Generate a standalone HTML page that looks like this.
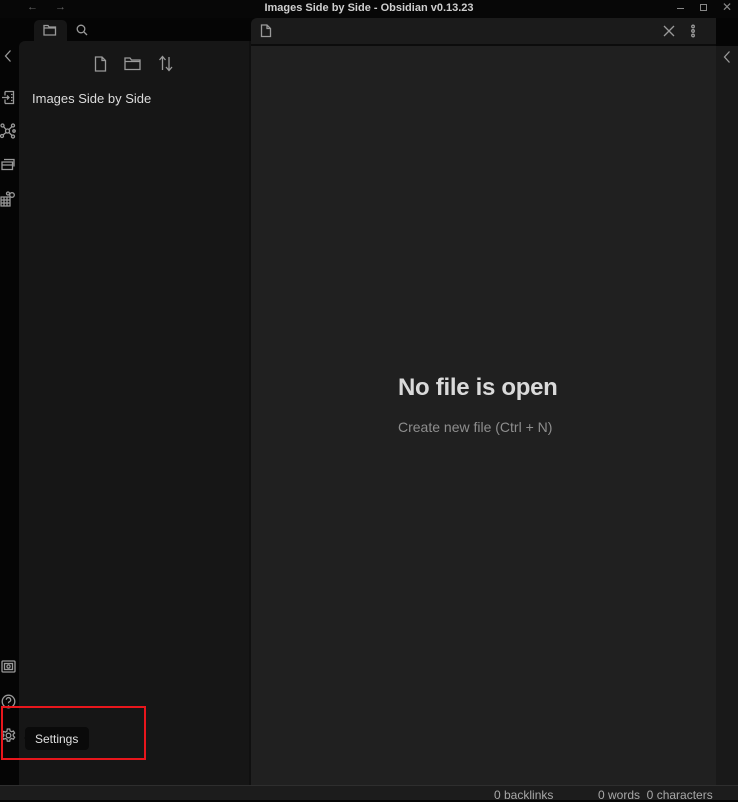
<!DOCTYPE html>
<html><head><style>
*{margin:0;padding:0;box-sizing:border-box}
body{width:738px;height:800px;background:#050505;font-family:"Liberation Sans",sans-serif;position:relative;overflow:hidden;color:#ddd}
.a{position:absolute}
svg{position:absolute;fill:none;stroke:#9a9a9a;stroke-width:1.3}
</style></head><body>
<div class="a" style="left:0;top:0;width:738px;height:18px;background:#070707"></div>
<div class="a" style="left:0;top:2px;width:738px;text-align:center;font-size:11px;font-weight:bold;color:#cfcfcf">Images Side by Side - Obsidian v0.13.23</div>
<div class="a" style="left:27px;top:1px;font-size:11px;color:#666">←</div>
<div class="a" style="left:55px;top:1px;font-size:11px;color:#666">→</div>
<div class="a" style="left:677px;top:8px;width:7px;height:1px;background:#888"></div>
<div class="a" style="left:700px;top:4px;width:7px;height:7px;border:1px solid #888"></div>
<div class="a" style="left:722px;top:0px;font-size:12px;color:#888">✕</div>
<div class="a" style="left:34px;top:20px;width:33px;height:22px;background:#161616;border-radius:5px 5px 0 0"></div>
<svg style="left:43px;top:24px" width="14" height="12"><path d="M1 1.5h4l1 1.5h6.5v8H1z M1 4h11.5"/></svg>
<svg style="left:76px;top:24px" width="12" height="12"><circle cx="5" cy="5" r="3.8"/><path d="M8 8l3 3"/></svg>
<div class="a" style="left:19px;top:41px;width:231px;height:745px;background:#161616;border-radius:6px 0 0 0"></div>
<div class="a" style="left:249px;top:41px;width:2px;height:745px;background:#101010"></div>
<svg style="left:94px;top:56px" width="13" height="16"><path d="M1.5 1h6.5l3.5 3.5V15h-10z M8 1v3.5h3.5"/></svg>
<svg style="left:124px;top:56px" width="18" height="15"><path d="M1 2h5l1.5 2h8.5v9.5H1z M1 5.5h15"/></svg>
<svg style="left:158px;top:55px" width="16" height="17"><path d="M4.5 15V2 M1.5 5l3-3.5 3 3.5 M11 2v13 M8 12l3 3.5 3-3.5"/></svg>
<div class="a" style="left:32px;top:91px;font-size:13px;color:#dcdcdc">Images Side by Side</div>
<svg style="left:3px;top:49px" width="10" height="14"><path d="M7.5 1.5L2.5 7l5 5.5"/></svg>
<svg style="left:1px;top:90px" width="14" height="15"><path d="M4 1.5h8.5v12H4 M4 5.5V1.5 M4 13.5v-4 M1 7.5h7 M6 5.5l2 2-2 2 M10 4.5h1.5 M10 7.5h1.5 M10 10.5h1.5"/></svg>
<svg style="left:0px;top:123px" width="16" height="16"><circle cx="7.5" cy="8" r="2"/><circle cx="2.5" cy="2.5" r="1.5"/><circle cx="13" cy="2.5" r="1.5"/><circle cx="2" cy="13" r="1.5"/><circle cx="13" cy="13.5" r="1.5"/><circle cx="14" cy="8" r="1.2"/><path d="M3.5 3.5l2.5 3 M12 3.5l-3 3 M3 12l3-2.5 M12 12.5l-3-3"/></svg>
<svg style="left:1px;top:158px" width="14" height="13"><path d="M3 1.5h10v7 M1 4h10.5v7.5H1z M1 7h10.5"/></svg>
<svg style="left:0px;top:191px" width="16" height="16"><path d="M1 6h9v9H1z M1 9h9 M1 12h9 M4 6v9 M7 6v9"/><circle cx="12" cy="4" r="2.3"/><circle cx="8" cy="2.5" r="1.5"/></svg>
<svg style="left:1px;top:660px" width="15" height="13"><rect x="1" y="1" width="13" height="11" rx="1"/><rect x="3.5" y="3.5" width="8" height="6"/><circle cx="7.5" cy="6.5" r="1.6"/></svg>
<svg style="left:1px;top:694px" width="15" height="15"><circle cx="7.5" cy="7.5" r="6.3"/><path d="M5.3 5.8a2.2 2.2 0 1 1 2.8 2.1c-.5.2-.6.6-.6 1.4 M7.5 11v.8"/></svg>
<svg style="left:1px;top:728px" width="15" height="15"><circle cx="7.5" cy="7.5" r="2.3"/><path d="M6.3 1h2.4l.4 1.9 1.5.8 1.8-.7 1.2 2-1.4 1.3v1.6l1.4 1.3-1.2 2-1.8-.7-1.5.8-.4 1.9H6.3l-.4-1.9-1.5-.8-1.8.7-1.2-2 1.4-1.3V6.7L1.4 5.4l1.2-2 1.8.7 1.5-.8z"/></svg>
<div class="a" style="left:20px;top:734px;width:0;height:0;border:4px solid transparent;border-right:5px solid #0a0a0a"></div>
<div class="a" style="left:25px;top:727px;width:64px;height:23px;background:#0a0a0a;border-radius:4px;font-size:12px;color:#e0e0e0;padding:5px 0 0 10px">Settings</div>
<div class="a" style="left:1px;top:706px;width:145px;height:54px;border:2px solid #e8161c"></div>
<div class="a" style="left:251px;top:18px;width:465px;height:26px;background:#1b1b1b;border-radius:6px 0 0 0"></div>
<div class="a" style="left:251px;top:44px;width:465px;height:2px;background:#0c0c0c"></div>
<div class="a" style="left:251px;top:46px;width:465px;height:740px;background:#202020"></div>
<svg style="left:260px;top:24px" width="12" height="14"><path d="M1.5 1h5.5l3.5 3.5V12.5h-9z M7 1v3.5h3.5"/></svg>
<svg style="left:663px;top:25px" width="12" height="12"><path d="M1 1l10 10M11 1L1 11"/></svg>
<svg style="left:690px;top:24px" width="6" height="14"><circle cx="3" cy="2.5" r="1.3"/><circle cx="3" cy="7" r="1.3"/><circle cx="3" cy="11.5" r="1.3"/></svg>
<div class="a" style="left:398px;top:374px;font-size:24px;font-weight:bold;color:#dadada;letter-spacing:-0.3px">No file is open</div>
<div class="a" style="left:398px;top:419px;font-size:14px;color:#8e8e8e">Create new file (Ctrl + N)</div>
<div class="a" style="left:716px;top:46px;width:22px;height:740px;background:#191919"></div>
<div class="a" style="left:716px;top:18px;width:22px;height:28px;background:#050505"></div>
<svg style="left:722px;top:50px" width="10" height="14"><path d="M7.5 1.5L2.5 7l5 5.5"/></svg>
<div class="a" style="left:0;top:785px;width:738px;height:15px;background:#1c1c1c;border-top:1px solid #2e2e2e"></div>
<div class="a" style="left:494px;top:788px;font-size:12px;color:#a8a8a8">0 backlinks</div>
<div class="a" style="left:598px;top:788px;font-size:12px;color:#a8a8a8">0 words&nbsp; 0 characters</div>
</body></html>
